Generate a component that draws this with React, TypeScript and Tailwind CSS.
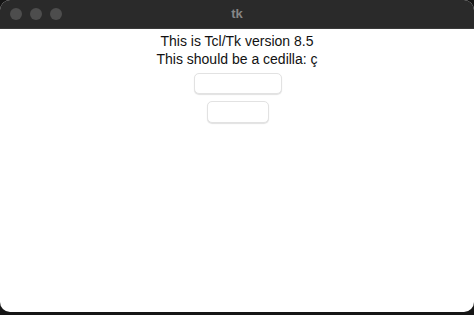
export default function App() {
    return (
        <div className="h-[315px] w-[474px] overflow-hidden bg-[#151515]" style={{ fontFamily: '"Liberation Sans", Arial, sans-serif' }}>
            <div className="flex h-[312px] w-[474px] flex-col overflow-hidden rounded-[10px] bg-white">
                <div className="relative flex h-[29px] shrink-0 items-center border-b border-[#3a3a3a] bg-[#2a2a2a] px-[10px]">
                    <div className="flex gap-[8px]">
                        <span className="h-[12px] w-[12px] rounded-full bg-[#4d4d4d]" />
                        <span className="h-[12px] w-[12px] rounded-full bg-[#4d4d4d]" />
                        <span className="h-[12px] w-[12px] rounded-full bg-[#4d4d4d]" />
                    </div>
                    <span className="absolute left-1/2 -translate-x-1/2 text-[13px] font-bold text-[#868686]">tk</span>
                </div>
                <div className="flex flex-col items-center pt-[3px]">
                    <p className="text-[14px] leading-[18px] text-[#111]">This is Tcl/Tk version 8.5</p>
                    <p className="text-[14px] leading-[18px] text-[#111]">This should be a cedilla: ç</p>
                    <button className="ml-[2px] mt-[5px] h-[21px] w-[88px] rounded-[5px] border border-[#e2e2e2] bg-white shadow-[0_1px_1px_rgba(0,0,0,0.12)]" />
                    <button className="ml-[2px] mt-[7px] h-[22px] w-[62px] rounded-[5px] border border-[#e2e2e2] bg-white shadow-[0_1px_1px_rgba(0,0,0,0.12)]" />
                </div>
            </div>
        </div>
    );
}
